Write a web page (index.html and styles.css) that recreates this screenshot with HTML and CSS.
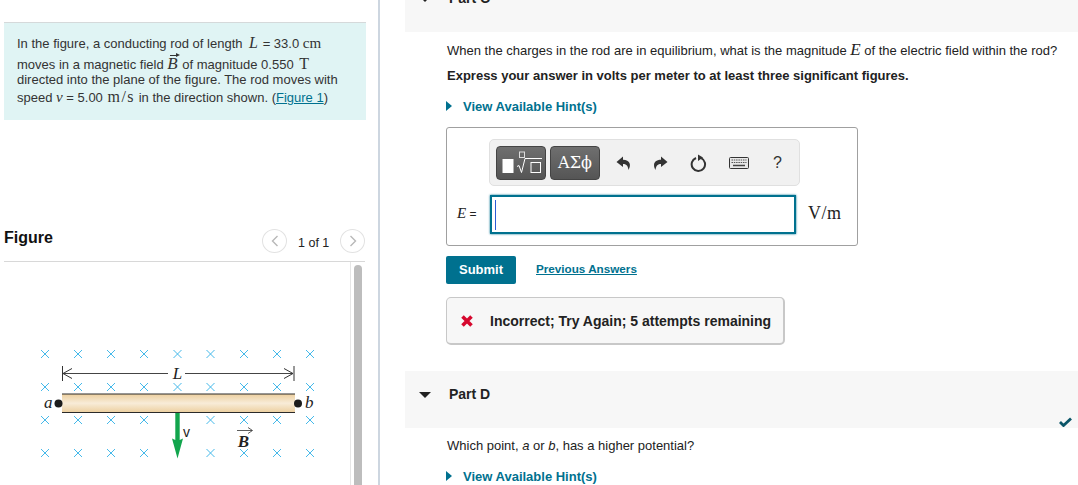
FILE: index.html
```html
<!DOCTYPE html>
<html lang="en">
<head>
<meta charset="utf-8">
<title>Part D</title>
<link rel="stylesheet" href="styles.css">
</head>
<body>
<div class="page">
  <aside class="left">
    <div class="intro">
      <p class="intro-line">In the figure, a conducting rod of length <i class="m m-l">L</i> = 33.0 <span class="m">cm</span></p>
      <p class="intro-line line-2">moves in a magnetic field <span class="vec"><i class="m m-b">B</i></span> of magnitude 0.550 <span class="m m-t">T</span></p>
      <p class="intro-line">directed into the plane of the figure. The rod moves with</p>
      <p class="intro-line line-4">speed <i class="m">v</i> = 5.00 <span class="m m-ms">m/s</span> in the direction shown. (<a class="intro-link" href="#">Figure 1</a>)</p>
    </div>
    <div class="fig-head">
      <h2 class="fig-title">Figure</h2>
      <div class="pager">
        <span class="pager-btn"><svg width="8" height="12" viewBox="0 0 8 12"><path d="M6.5 1 1.5 6l5 5" fill="none" stroke="#b8b8b8" stroke-width="1.4"/></svg></span>
        <span class="pager-text">1 of 1</span>
        <span class="pager-btn"><svg width="8" height="12" viewBox="0 0 8 12"><path d="M1.5 1l5 5-5 5" fill="none" stroke="#b8b8b8" stroke-width="1.4"/></svg></span>
      </div>
    </div>
    <div class="fig-body">
      <svg class="diagram" width="346" height="223" viewBox="0 262 346 223">
        <defs>
          <linearGradient id="rod" x1="0" y1="0" x2="0" y2="1">
            <stop offset="0" stop-color="#eccf9f"/>
            <stop offset=".5" stop-color="#f8ecd8"/>
            <stop offset="1" stop-color="#eccf9f"/>
          </linearGradient>
          <path id="x" d="M-4 -4 4 4M4 -4 -4 4" stroke="#45b9ea" stroke-width="1" fill="none"/>
        </defs>
        <g>
          <use href="#x" x="45" y="354"/><use href="#x" x="78" y="354"/><use href="#x" x="111" y="354"/><use href="#x" x="144" y="354"/><use href="#x" x="177.5" y="354"/><use href="#x" x="210.5" y="354"/><use href="#x" x="244" y="354"/><use href="#x" x="277" y="354"/><use href="#x" x="310" y="354"/>
          <use href="#x" x="45" y="387"/><use href="#x" x="78" y="387"/><use href="#x" x="111" y="387"/><use href="#x" x="144" y="387"/><use href="#x" x="177.5" y="387"/><use href="#x" x="210.5" y="387"/><use href="#x" x="244" y="387"/><use href="#x" x="277" y="387"/><use href="#x" x="310" y="387"/>
          <use href="#x" x="45" y="420"/><use href="#x" x="78" y="420"/><use href="#x" x="111" y="420"/><use href="#x" x="144" y="420"/><use href="#x" x="210.5" y="420"/><use href="#x" x="244" y="420"/><use href="#x" x="277" y="420"/><use href="#x" x="310" y="420"/>
          <use href="#x" x="45" y="453"/><use href="#x" x="78" y="453"/><use href="#x" x="111" y="453"/><use href="#x" x="144" y="453"/><use href="#x" x="210.5" y="453"/><use href="#x" x="244" y="453"/><use href="#x" x="277" y="453"/><use href="#x" x="310" y="453"/>
        </g>
        <path d="M62.5 366v15M294 366v15" stroke="#333" stroke-width="1" fill="none"/>
        <path d="M63 373.5H168M185 373.5H293" stroke="#444" stroke-width="1" fill="none"/>
        <path d="M72 368.5 63 373.5 72 378.5M284 368.5 293 373.5 284 378.5" stroke="#333" stroke-width="1" fill="none"/>
        <text x="177.5" y="379" class="d-ital" text-anchor="middle">L</text>
        <rect x="62" y="394" width="233" height="18.5" fill="url(#rod)"/>
        <path d="M62 394H295M62 412.5H295" stroke="#2a2a2a" stroke-width="1"/>
        <circle cx="58.5" cy="403.5" r="4" fill="#1c1c1c"/>
        <circle cx="298" cy="403.5" r="4" fill="#1c1c1c"/>
        <text x="44" y="408" class="d-ital">a</text>
        <text x="305" y="408" class="d-ital">b</text>
        <path d="M175.300 413h4.400v27l3.300-1.500-5.500 20-5.500-20 3.300 1.500z" fill="#12a54d"/>
        <text x="183" y="437" class="d-sans">v</text>
        <text x="243.500" y="447" class="d-bold" text-anchor="middle">B</text>
        <path d="M237 430.500H252M248 427.500 252.500 430.500 248 433.500" stroke="#333" stroke-width=".8" fill="none"/>
      </svg>
      <div class="track"><div class="thumb"></div></div>
    </div>
  </aside>

  <main class="right">
    <section class="part part-c">
      <header class="part-head">
        <span class="caret"></span><span class="part-name">Part C</span>
      </header>
      <div class="part-body">
        <p class="question">When the charges in the rod are in equilibrium, what is the magnitude <i class="m em">E</i> of the electric field within the rod?</p>
        <p class="express">Express your answer in volts per meter to at least three significant figures.</p>
        <a class="hint" href="#"><span class="hint-caret"></span>View Available Hint(s)</a>
        <div class="answer">
          <div class="toolbar">
            <span class="tool-btn tool-templates">
              <svg width="44" height="26" viewBox="0 0 44 26">
                <rect x="3.500" y="9" width="11" height="14" fill="#fff"/>
                <path d="M18 16.500 20 15.500l2.500 7 3.500-14H43" fill="none" stroke="#fff" stroke-width="1"/>
                <rect x="32" y="12.500" width="9.500" height="10" fill="none" stroke="#fff" stroke-width="1"/>
                <rect x="20.500" y="2" width="5" height="5.500" fill="none" stroke="#ddd" stroke-width="1"/>
              </svg>
            </span>
            <span class="tool-btn tool-greek">ΑΣϕ</span>
            <span class="tool-icons">
              <svg class="ic" width="16" height="16" viewBox="0 0 16 16"><path d="M7 1.500.5 7 7 12V9c3 0 5 1.500 5.500 6C15.500 10 14 4.800 7 4.800z" fill="#333"/></svg>
              <svg class="ic" width="16" height="16" viewBox="0 0 16 16"><path d="M8 1.500 14.500 7 8 12V9c-3 0-5 1.500-5.500 6C-.5 10 1 4.800 8 4.800z" fill="#333"/></svg>
              <svg class="ic" width="18" height="18" viewBox="0 0 18 18"><path d="M11.200 4.200A6.700 6.700 0 1 1 6 4" fill="none" stroke="#333" stroke-width="2"/><path d="M8 .5v6.500l5-3.500z" fill="#333"/></svg>
              <svg class="ic" width="20" height="12" viewBox="0 0 20 12"><rect x=".5" y=".5" width="19" height="11" rx="1" fill="#e8e8e8" stroke="#333"/><path d="M2.500 3h15M2.500 5.500h15" stroke="#555" stroke-dasharray="1.500 .8"/><path d="M4 8.500h12" stroke="#444" stroke-width="1.500"/></svg>
              <span class="ic-q">?</span>
            </span>
          </div>
          <div class="eq-row">
            <span class="eq-label"><i class="m em">E</i> =</span>
            <span class="eq-input"><span class="eq-caret"></span></span>
            <span class="m eq-unit">V/m</span>
          </div>
        </div>
        <div class="actions">
          <button class="submit" type="button">Submit</button>
          <a class="prev" href="#">Previous Answers</a>
        </div>
        <div class="feedback">
          <svg width="14" height="14" viewBox="0 0 14 14"><path d="M2.500 2.500l9 9M11.500 2.500l-9 9" stroke="#d6082e" stroke-width="3.600"/></svg>
          <span class="feedback-text">Incorrect; Try Again; 5 attempts remaining</span>
        </div>
      </div>
    </section>

    <section class="part part-d">
      <header class="part-head">
        <span class="caret"></span><span class="part-name">Part D</span>
        <svg class="check" width="13" height="10" viewBox="0 0 13 10"><path d="M1 5 4.500 8.500 12 1.500" fill="none" stroke="#0b5669" stroke-width="2.800"/></svg>
      </header>
      <div class="part-body">
        <p class="question q-d">Which point, <i>a</i> or <i>b</i>, has a higher potential?</p>
        <a class="hint" href="#"><span class="hint-caret"></span>View Available Hint(s)</a>
      </div>
    </section>
  </main>
</div>
</body>
</html>
```

FILE: styles.css
```css
* { box-sizing: border-box; }
html, body { margin: 0; height: 485px; overflow: hidden; background: #fff; }
body { font-family: "Liberation Sans", Arial, sans-serif; font-size: 13px; color: #222; }
p { margin: 0; }
a { color: #00718f; }
.m { font-family: "Liberation Serif", "DejaVu Serif", serif; }
.page { display: flex; height: 485px; }

.left { width: 380px; flex: none; border-right: 2px solid #cdd6e0; padding: 22px 12px 0 4px; }
.intro { width: 362px; height: 98px; background: #e0f4f4; border-top: 1px solid #d5d9da; padding: 12px 10px 0 13px; color: #333; }
.intro-line { height: 16px; line-height: 16px; white-space: nowrap; font-size: 13px; }
.line-2 { height: 21px; padding-top: 5px; }
.line-4 { height: 17px; padding-top: 1px; }
.intro-line .m { font-size: 15px; }
.intro-line .m-l { font-size: 16px; margin: 0 1px 0 3px; }
.intro-line .m-b { font-size: 17px; }
.intro-line .m-t { font-size: 16px; margin-left: 2px; }
.intro-line .m-ms { font-size: 16px; letter-spacing: 1.500px; margin-left: 1px; }
.intro-link { color: #00718f; text-decoration: underline; }
.vec { position: relative; margin-right: 1px; }
.vec::before { content: ""; position: absolute; left: 3px; top: -2px; width: 8px; height: 1px; background: #333; }
.vec::after { content: ""; position: absolute; left: 9px; top: -4px; border-left: 4px solid #333; border-top: 2.500px solid transparent; border-bottom: 2.500px solid transparent; }

.fig-head { display: flex; justify-content: space-between; align-items: center; width: 361px; height: 142px; padding-top: 95px; border-bottom: 1px solid #d8d8d8; }
.fig-title { margin: 0; font-size: 16px; font-weight: bold; color: #111; }
.pager { display: flex; align-items: center; gap: 11px; margin-top: 6px; }
.pager-btn { width: 25px; height: 24px; border: 1px solid #e2e2e2; border-radius: 50%; display: flex; align-items: center; justify-content: center; }
.pager-text { font-size: 12.500px; color: #222; width: 32px; padding-top: 3px; white-space: nowrap; }
.pager .pager-btn:last-child { margin-left: -1px; }

.fig-body { display: flex; width: 360px; height: 223px; }
.diagram { display: block; margin-left: -4px; flex: none; }
.d-ital { font: italic 17px "Liberation Serif", serif; fill: #222; }
.d-sans { font: 14px "Liberation Sans", sans-serif; fill: #222; }
.d-bold { font: italic bold 17px "Liberation Serif", serif; fill: #222; }
.track { width: 14px; margin-left: 4px; border-left: 1px solid #e6e6e6; padding: 3px 2px 0 3px; height: 223px; }
.thumb { width: 8px; height: 240px; border-radius: 4px; background: #bdbdbd; }

.right { flex: 1; min-width: 0; padding-left: 25px; }
.part-head { position: relative; height: 57px; background: #f7f7f7; padding: 15px 0 0 44px; display: flex; align-items: flex-start; }
.part-c { margin-top: -25px; }
.caret { position: absolute; left: 14px; top: 21px; border: 6px solid transparent; border-top: 6px solid #222; border-bottom: 0; }
.part-name { font-size: 14px; font-weight: bold; color: #222; line-height: 16px; }
.check { position: absolute; right: 6px; bottom: 1px; }

.part-body { padding: 0 0 0 42px; }
.question { margin-top: 9px; font-size: 13px; line-height: 18px; white-space: nowrap; color: #222; }
.em { font-size: 17px; }
.express { margin-top: 7px; font-size: 13px; line-height: 18px; font-weight: bold; color: #222; }
.hint { display: flex; align-items: center; margin-top: 13px; height: 16px; font-size: 13px; font-weight: bold; text-decoration: none; color: #00718f; margin-left: -1px; }
.hint-caret { width: 0; height: 0; border-left: 6px solid #00718f; border-top: 5px solid transparent; border-bottom: 5px solid transparent; margin-right: 11px; }

.answer { position: relative; width: 412px; height: 119px; margin: 13px 0 0 -1px; border: 1px solid #a0a0a0; border-radius: 3px; padding: 11px 0 0 10px; display: flex; flex-direction: column; }
.toolbar { display: flex; align-items: center; align-self: flex-start; margin-left: 32px; width: 311px; height: 47px; background: #f1f1f1; border: 1px solid #e0e0e0; border-radius: 5px; padding-left: 6px; gap: 4px; }
.tool-btn { display: flex; align-items: center; justify-content: center; height: 34px; border: 1px solid #444; border-radius: 4px; background: linear-gradient(#6f6f6f, #555); color: #fff; }
.tool-templates { width: 50px; }
.tool-greek { width: 50px; font: 16px "DejaVu Serif", "Liberation Serif", serif; }
.tool-icons { display: flex; align-items: center; gap: 21px; margin-left: 12px; }
.ic { display: block; flex: none; }
.ic-q { font-size: 16px; color: #333; margin-left: 3px; }
.eq-row { display: flex; align-items: center; margin-top: 9px; }
.eq-label { font-size: 12px; width: 33px; white-space: nowrap; padding-bottom: 2px; }
.eq-label .em { font-size: 15px; }
.eq-input { width: 306px; height: 39px; border: 2px solid #00718f; box-shadow: 0 0 2px #00718f; background: #fff; padding: 3px 0 0 3px; }
.eq-caret { display: block; width: 1px; height: 30px; background: #2b5cd6; }
.eq-unit { margin-left: 12px; font-size: 18px; letter-spacing: .5px; color: #222; padding-bottom: 2px; }

.actions { display: flex; align-items: center; gap: 20px; margin: 10px 0 0 -1px; }
.submit { width: 70px; height: 28px; border: 0; border-radius: 2px; background: #00718f; color: #fff; font: bold 13px "Liberation Sans", sans-serif; padding: 0 0 2px; }
.prev { font-size: 11.700px; font-weight: bold; text-decoration: underline; position: relative; top: -2px; }
.feedback { display: flex; align-items: center; gap: 16px; width: 339px; height: 48px; margin: 13px 0 0 -1px; padding: 1px 0 0 13px; background: #f7f7f7; border: 1px solid #c8c8c8; border-right-width: 2px; border-bottom-width: 2px; border-radius: 5px; }
.feedback-text { font-size: 14px; font-weight: bold; color: #222; white-space: nowrap; }

.part-d { margin-top: 26px; }
.q-d { margin-top: 9px; }
.part-d .hint { margin-top: 13px; }
```
